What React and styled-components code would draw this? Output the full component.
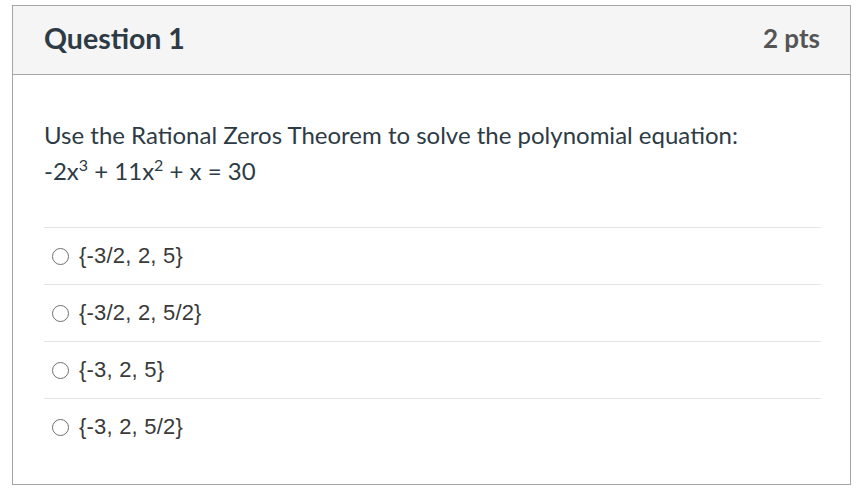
import React from 'react';
import styled, { createGlobalStyle } from 'styled-components';

const GlobalStyle = createGlobalStyle`
  body {
    margin: 0;
    background: #fff;
    font-family: Lato, "Liberation Sans", sans-serif;
  }
`;

const answers = ['{-3/2, 2, 5}', '{-3/2, 2, 5/2}', '{-3, 2, 5}', '{-3, 2, 5/2}'];

const App = () => (
  <Page>
    <GlobalStyle />
    <Card>
      <Header>
        <Title>Question 1</Title>
        <Points>2 pts</Points>
      </Header>
      <Body>
        <Prompt>
          Use the Rational Zeros Theorem to solve the polynomial equation:
          <br />
          -2x<sup>3</sup> + 11x<sup>2</sup> + x = 30
        </Prompt>
        <AnswerList>
          {answers.map((a) => (
            <Answer key={a}>
              <Radio />
              <AnswerText>{a}</AnswerText>
            </Answer>
          ))}
        </AnswerList>
      </Body>
    </Card>
  </Page>
);

export default App;

const Page = styled.div`
  padding: 5px 8px 11px 12px;
`;

const Card = styled.div`
  border: 1px solid #a5a5a5;
  width: 839px;
  box-sizing: border-box;
`;

const Header = styled.div`
  display: flex;
  align-items: center;
  justify-content: space-between;
  height: 63px;
  padding: 0 30px 5px 31px;
  background: #f5f5f5;
  border-bottom: 1px solid #a5a5a5;
`;

const Title = styled.div`
  font-family: Lato, sans-serif;
  font-weight: 700;
  font-size: 28.5px;
  color: #2d3b45;
`;

const Points = styled.div`
  font-family: Lato, sans-serif;
  font-weight: 700;
  font-size: 26px;
  color: #555;
`;

const Body = styled.div`
  padding: 42px 29px 29px 31px;
`;

const Prompt = styled.div`
  font-family: Lato, sans-serif;
  font-size: 24px;
  line-height: 36px;
  color: #2d3b45;
  margin-bottom: 38px;

  sup {
    font-size: 16px;
    line-height: 0;
    vertical-align: 9px;
  }
`;

const AnswerList = styled.div`
  display: flex;
  flex-direction: column;
`;

const Answer = styled.div`
  display: flex;
  align-items: center;
  gap: 10px;
  height: 56px;
  padding-left: 8px;
  border-top: 1px solid #e4e4e4;
`;

const Radio = styled.span`
  flex: none;
  box-sizing: border-box;
  width: 17px;
  height: 17px;
  border: 1.5px solid #6f6f6f;
  border-radius: 50%;
`;

const AnswerText = styled.span`
  font-family: "Liberation Sans", Arial, sans-serif;
  font-size: 22px;
  letter-spacing: 0.2px;
  color: #3a3a3a;
`;
